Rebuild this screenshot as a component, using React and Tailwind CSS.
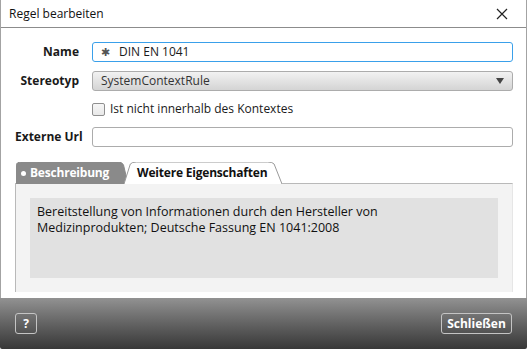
import React from 'react';

function TabShape({ fill, stroke, d }) {
  return (
    <svg className="absolute inset-0 h-full w-full" viewBox="0 0 100 22" preserveAspectRatio="none">
      <path d={d} fill={fill} stroke={stroke} strokeWidth="1" vectorEffect="non-scaling-stroke" />
    </svg>
  );
}

function App() {
  return (
    <div className="w-[528px] h-[349px] bg-white flex flex-col font-['Open_Sans','Noto_Sans',sans-serif] text-[12px] text-[#1a1a1a] overflow-hidden">
      <div className="flex-1 flex flex-col border-x border-[#a3a3a3] mr-[1px]">
        {/* Title bar */}
        <div className="h-[28px] flex items-center justify-between pl-[8px] pr-[18px] border-b border-[#8c8c8c] shrink-0">
          <span className="text-[12px] text-[#111]">Regel bearbeiten</span>
          <svg width="12" height="12" viewBox="0 0 12 12">
            <path d="M1 1 L11 11 M11 1 L1 11" stroke="#222" strokeWidth="1.2" />
          </svg>
        </div>

        {/* Form */}
        <div className="flex flex-col pl-[14px] pr-[13px] pt-[14px]">
          <div className="grid grid-cols-[64px_1fr] gap-x-[13px] gap-y-[9px] items-center">
            <span className="text-right font-bold text-[12px]">Name</span>
            <div className="h-[20px] border border-[#3aa0ea] rounded-[3px] flex items-center pl-[8px] gap-[9px] text-[12px]">
              <span className="text-[#555] text-[11px]">✱</span>
              <span>DIN EN 1041</span>
            </div>

            <span className="text-right font-bold text-[12px]">Stereotyp</span>
            <div className="h-[20px] border border-[#acacac] rounded-[3px] bg-gradient-to-b from-[#f2f2f2] to-[#d4d4d4] flex items-center justify-between pl-[8px] pr-[8px] text-[#333]">
              <span>SystemContextRule</span>
              <svg width="8" height="6" viewBox="0 0 8 6">
                <path d="M0 0 H8 L4 6 Z" fill="#444" />
              </svg>
            </div>

            <span />
            <div className="h-[18px] flex items-center gap-[5px]">
              <span className="w-[13px] h-[13px] border border-[#8f8f8f] rounded-[2px] bg-gradient-to-b from-[#f6f6f6] to-[#e8e8e8]" />
              <span>Ist nicht innerhalb des Kontextes</span>
            </div>

            <span className="text-right font-bold text-[12px] whitespace-nowrap">Externe Url</span>
            <div className="h-[20px] border border-[#acacac] rounded-[3px] bg-white" />
          </div>

          {/* Tabs */}
          <div className="mt-[15px] flex items-end h-[22px] pl-[1px] relative z-10">
            <div className="relative w-[112px] h-[22px] flex items-center pl-[5px] gap-[4px]">
              <TabShape fill="#8a8a8a" stroke="#8a8a8a" d="M0 22 L0 4 Q0 0 5 0 L91 0 Q95 0 96 3 L100 22 Z" />
              <span className="relative w-[5px] h-[5px] rounded-full bg-white" />
              <span className="relative font-bold text-white text-[12px] tracking-[-0.2px]">Beschreibung</span>
            </div>
            <div className="relative w-[158px] h-[22px] -ml-[4px] flex items-center pl-[13px]">
              <TabShape fill="#ffffff" stroke="#9a9a9a" d="M0 22 L4 2 Q5 0 8 0 L91 0 Q94 0 95 2 L100 22" />
              <span className="relative font-bold text-[#111] text-[12px] tracking-[-0.2px]">Weitere Eigenschaften</span>
            </div>
          </div>

          {/* Panel */}
          <div className="border border-[#b9b9b9] border-b-0 border-r-[#e6e6e6] bg-[#f3f3f3] pt-[14px] px-[14px] pb-[14px] -mt-[1px]">
            <div className="h-[80px] bg-[#e1e1e1] pl-[7px] pt-[6px] text-[12.5px] leading-[16px] text-[#111]">
              Bereitstellung von Informationen durch den Hersteller von
              <br />
              Medizinprodukten; Deutsche Fassung EN 1041:2008
            </div>
          </div>
        </div>
        <div className="flex-1" />
      </div>

      {/* Footer */}
      <div className="h-[51px] shrink-0 bg-gradient-to-b from-[#929292] to-[#383838] flex items-center justify-between pl-[15px] pr-[15px] mr-[1px] rounded-b-[2px]">
        <button className="w-[22px] h-[21px] border border-[#c4c4c4] rounded-[3px] text-white font-bold text-[12px] flex items-center justify-center">
          ?
        </button>
        <button className="w-[71px] h-[21px] border border-[#c4c4c4] rounded-[3px] text-white font-bold text-[12px] flex items-center justify-center">
          Schließen
        </button>
      </div>
    </div>
  );
}

export default App;
